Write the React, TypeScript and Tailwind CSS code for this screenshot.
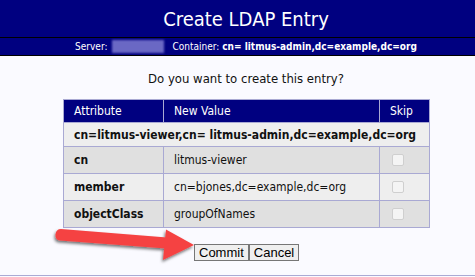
import React from 'react';

const font = { fontFamily: 'Tahoma, "DejaVu Sans", Verdana, sans-serif' };

const rows = [
  { attr: 'cn', value: 'litmus-viewer', bg: 'bg-[#e0e0e0]' },
  { attr: 'member', value: 'cn=bjones,dc=example,dc=org', bg: 'bg-[#eeeeee]' },
  { attr: 'objectClass', value: 'groupOfNames', bg: 'bg-[#e0e0e0]' },
];

const Arrow: React.FC = () => (
  <svg
    className="absolute left-[50px] top-[222px] pointer-events-none"
    width="150"
    height="48"
    viewBox="50 222 150 48"
  >
    <defs>
      <filter id="sh" x="-20%" y="-40%" width="140%" height="180%">
        <feDropShadow dx="-1" dy="2" stdDeviation="1.6" floodColor="#000" floodOpacity="0.55" />
      </filter>
    </defs>
    <g filter="url(#sh)" fill="#f54343">
      <path d="M61 229 L167 237.5 L166 248.5 L60 240.5 Q55 240 55.5 234.5 Q56 229 61 229 Z" />
      <path d="M166 229.5 L194 245 L163 260 Z" />
    </g>
  </svg>
);

const App: React.FC = () => {
  return (
    <div className="w-[475px] h-[277px] overflow-hidden bg-[#fafaff] relative font-stretch-semi-condensed" style={font}>
      <div className="w-[492px]">
        <div className="h-[37px] bg-[#000080] text-white text-[20px] flex items-center justify-center">
          Create LDAP Entry
        </div>
        <div className="h-[19px] bg-[#000080] border-y border-black text-white text-[10px] flex items-center justify-center">
          <span>Server:</span>
          <span className="ml-[5px] w-[52px] h-[13px] bg-[#6a68c4] blur-[1px]" />
          <span className="ml-[8px]">Container:</span>
          <span className="ml-[3px] font-bold">cn= litmus-admin,dc=example,dc=org</span>
        </div>
        <div className="text-center text-[13px] leading-[16px] text-[#111] pt-[15px] h-[43px]">
          Do you want to create this entry?
        </div>
        <table className="ml-[63px] w-[366px] table-fixed border-collapse text-[12px] leading-[16px] text-[#111]">
          <colgroup>
            <col className="w-[100px]" />
            <col className="w-[216px]" />
            <col className="w-[50px]" />
          </colgroup>
          <thead>
            <tr className="bg-[#000080] text-white h-[23px]">
              <th className="border border-[#a9a9d3] text-left font-normal pl-[10px] p-0">Attribute</th>
              <th className="border border-[#a9a9d3] text-left font-normal pl-[10px] p-0">New Value</th>
              <th className="border border-[#a9a9d3] text-left font-normal pl-[10px] p-0">Skip</th>
            </tr>
          </thead>
          <tbody>
            <tr className="bg-[#eeeeee] h-[24px]">
              <td colSpan={3} className="border border-[#a9a9d3] font-bold pl-[10px] whitespace-nowrap">
                cn=litmus-viewer,cn= litmus-admin,dc=example,dc=org
              </td>
            </tr>
            {rows.map((r) => (
              <tr key={r.attr} className={`${r.bg} h-[27px]`}>
                <td className="border border-[#a9a9d3] font-bold pl-[10px]">{r.attr}</td>
                <td className="border border-[#a9a9d3] pl-[10px] whitespace-nowrap">{r.value}</td>
                <td className="border border-[#a9a9d3] pl-[12px]">
                  <span className="block w-[12px] h-[12px] rounded-[2px] border border-[#cfcfcf] bg-[#f4f4f4]" />
                </td>
              </tr>
            ))}
          </tbody>
        </table>
        <div className="flex ml-[194px] mt-[16px]" style={{ fontFamily: '"Liberation Sans", Arial, sans-serif' }}>
          <button className="h-[17px] px-[4px] text-[13px] leading-none bg-[#efefef] border border-[#767676] text-black">
            Commit
          </button>
          <button className="h-[17px] px-[4px] text-[13px] leading-none bg-[#efefef] border border-[#767676] text-black">
            Cancel
          </button>
        </div>
        <div className="mt-[14px] border-t border-[#aaaad4]" />
      </div>
      <Arrow />
    </div>
  );
};

export default App;
